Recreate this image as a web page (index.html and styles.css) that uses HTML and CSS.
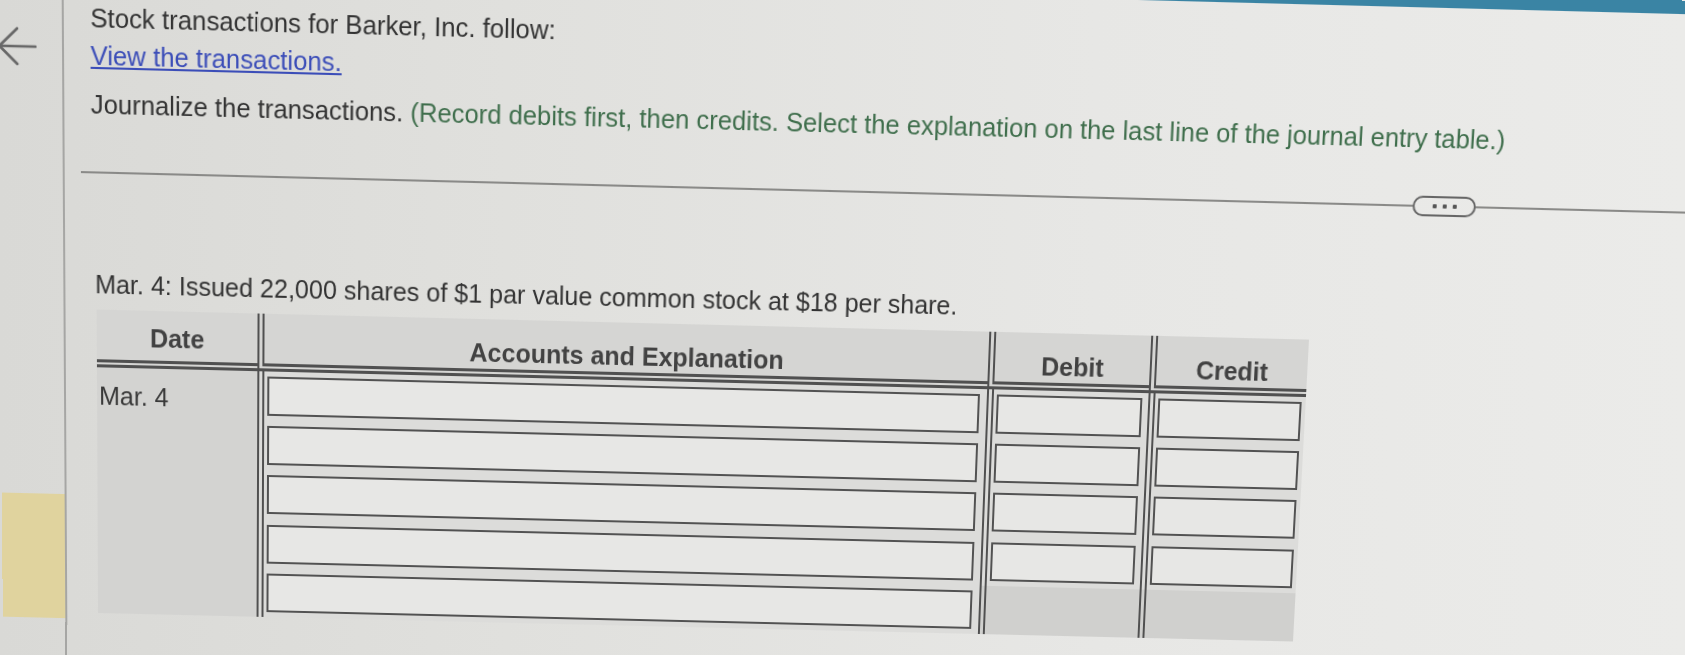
FILE: index.html
```html
<!DOCTYPE html>
<html lang="en">
<head>
<meta charset="utf-8">
<title>Journal entry</title>
<link rel="stylesheet" href="styles.css">
</head>
<body>
<div class="screen">
  <div class="topbar"></div>
  <div class="main">
    <aside class="side">
      <svg class="back" viewBox="0 0 38 40" aria-hidden="true">
        <polyline points="19,3 1.5,20 19,37" fill="none" stroke="#686868" stroke-width="2.6" stroke-linecap="round" stroke-linejoin="round"/>
        <line x1="1.5" y1="20" x2="37" y2="20" stroke="#686868" stroke-width="2.6" stroke-linecap="round"/>
      </svg>
      <div class="note"></div>
    </aside>
    <section class="content">
      <p class="title">Stock transactions for Barker, Inc. follow:</p>
      <a class="link" href="#">View the transactions.</a>
      <p class="instr">Journalize the transactions. <span class="hint">(Record debits first, then credits. Select the explanation on the last line of the journal entry table.)</span></p>
      <div class="divider">
        <span class="rule first"></span>
        <button class="more" type="button"><i></i><i></i><i></i></button>
        <span class="rule rest"></span>
      </div>
      <p class="prompt">Mar. 4: Issued 22,000 shares of $1 par value common stock at $18 per share.</p>
      <table class="journal">
        <colgroup>
          <col class="c-date">
          <col class="c-acct">
          <col class="c-debit">
          <col class="c-credit">
        </colgroup>
        <thead>
          <tr>
            <th class="h-date">Date</th>
            <th class="sep">Accounts and Explanation</th>
            <th class="sep">Debit</th>
            <th class="sep">Credit</th>
          </tr>
        </thead>
        <tbody>
          <tr>
            <td class="date" rowspan="5">Mar. 4</td>
            <td class="sep acct"><div class="box"></div></td>
            <td class="sep debit"><div class="box"></div></td>
            <td class="sep credit"><div class="box"></div></td>
          </tr>
          <tr>
            <td class="sep acct"><div class="box"></div></td>
            <td class="sep debit"><div class="box"></div></td>
            <td class="sep credit"><div class="box"></div></td>
          </tr>
          <tr>
            <td class="sep acct"><div class="box"></div></td>
            <td class="sep debit"><div class="box"></div></td>
            <td class="sep credit"><div class="box"></div></td>
          </tr>
          <tr>
            <td class="sep acct"><div class="box"></div></td>
            <td class="sep debit"><div class="box"></div></td>
            <td class="sep credit"><div class="box"></div></td>
          </tr>
          <tr>
            <td class="sep acct"><div class="box"></div></td>
            <td class="sep off"></td>
            <td class="sep off"></td>
          </tr>
        </tbody>
      </table>
    </section>
  </div>
</div>
</body>
</html>
```

FILE: styles.css
```css
html, body {
  margin: 0;
  height: 100%;
  overflow: hidden;
}

body {
  background:
    linear-gradient(#a6a6a4, #a6a6a4) 65.4px 622px / 2px 33px no-repeat,
    linear-gradient(90deg, #d9d9d6 0%, #e0e0dd 30%, #e7e7e5 65%, #ebebe9 100%);
  font-family: "Liberation Sans", Arial, sans-serif;
}

.screen {
  width: 1680px;
  height: 655px;
  transform-origin: 0 0;
  transform: matrix3d(1.023099, 0.026417, 0, 0.0000033010, 0.0091412, 1.048418, 0, 0.0000487612, 0, 0, 1, 0, -2.98754, -43.2348, 0, 1);
}

.topbar {
  height: 13px;
  background: #3a84a4;
}

.main {
  display: flex;
  height: 642px;
}

.side {
  flex: none;
  width: 63px;
  border-right: 2px solid #a6a6a4;
  display: flex;
  flex-direction: column;
}

.back {
  display: block;
  width: 38px;
  height: 40px;
  margin-top: 52px;
}

.note {
  margin-top: 418px;
  height: 125px;
  background: #e0d39e;
}

.content {
  flex: 1;
  padding: 29px 0 0 26px;
}

.title,
.instr,
.prompt {
  margin: 0;
  font-size: 25px;
  line-height: 29px;
  color: #333333;
}

.title,
.instr {
  font-size: 25.3px;
}

.link {
  display: block;
  width: max-content;
  margin-top: 7px;
  font-size: 25.3px;
  line-height: 29px;
  color: #3b4db8;
  text-decoration: underline;
}

.instr {
  margin-top: 17.5px;
}

.hint {
  color: #3f6e4c;
}

.divider {
  display: flex;
  align-items: center;
  height: 20px;
  margin: 41.5px 0 0 -10px;
}

.rule {
  height: 2px;
  background: #8a8a88;
}

.rule.first {
  flex: none;
  width: 1321px;
}

.rule.rest {
  flex: 1;
}

.more {
  flex: none;
  width: 63px;
  height: 20px;
  box-sizing: border-box;
  border: 2px solid #666666;
  border-radius: 10px;
  background: transparent;
  padding: 0;
  display: flex;
  align-items: center;
  justify-content: center;
  gap: 6px;
}

.more i {
  display: block;
  width: 4px;
  height: 4px;
  border-radius: 1px;
  background: #555555;
}

.prompt {
  margin-top: 84.6px;
  padding-left: 3.4px;
}

.journal {
  margin: 10.4px 0 0 5px;
  width: 1210px;
  table-layout: fixed;
  border-collapse: separate;
  border-spacing: 0;
  font-size: 25px;
  line-height: 29px;
}

.c-date { width: 160px; }
.c-acct { width: 730px; }
.c-debit { width: 162px; }
.c-credit { width: 158px; }

.journal thead tr {
  height: 57px;
}

.journal th {
  background: #d5d5d3;
  color: #424242;
  font-weight: bold;
  text-align: center;
  vertical-align: bottom;
  padding: 0 0 1px;
  border-bottom: 8px double #505050;
}

.journal th.h-date {
  padding-bottom: 7px;
}

.journal .sep {
  border-left: 7px double #505050;
}

.journal tbody tr {
  height: 49.2px;
}

.journal td {
  padding: 0;
  vertical-align: middle;
  background: #dcdcda;
}

.journal td.date {
  vertical-align: top;
  padding: 13.6px 0 0 2px;
  background: #d3d3d1;
  color: #383838;
}

.journal td.acct {
  padding: 0 7px 0 3px;
}

.journal td.debit {
  padding: 0 6px 0 3px;
}

.journal td.credit {
  padding: 0 4px 0 3px;
}

.journal td.off {
  background: #d0d0ce;
}

.box {
  height: 39px;
  box-sizing: border-box;
  border: 2.5px solid #525252;
  background: #e7e7e5;
}
```
